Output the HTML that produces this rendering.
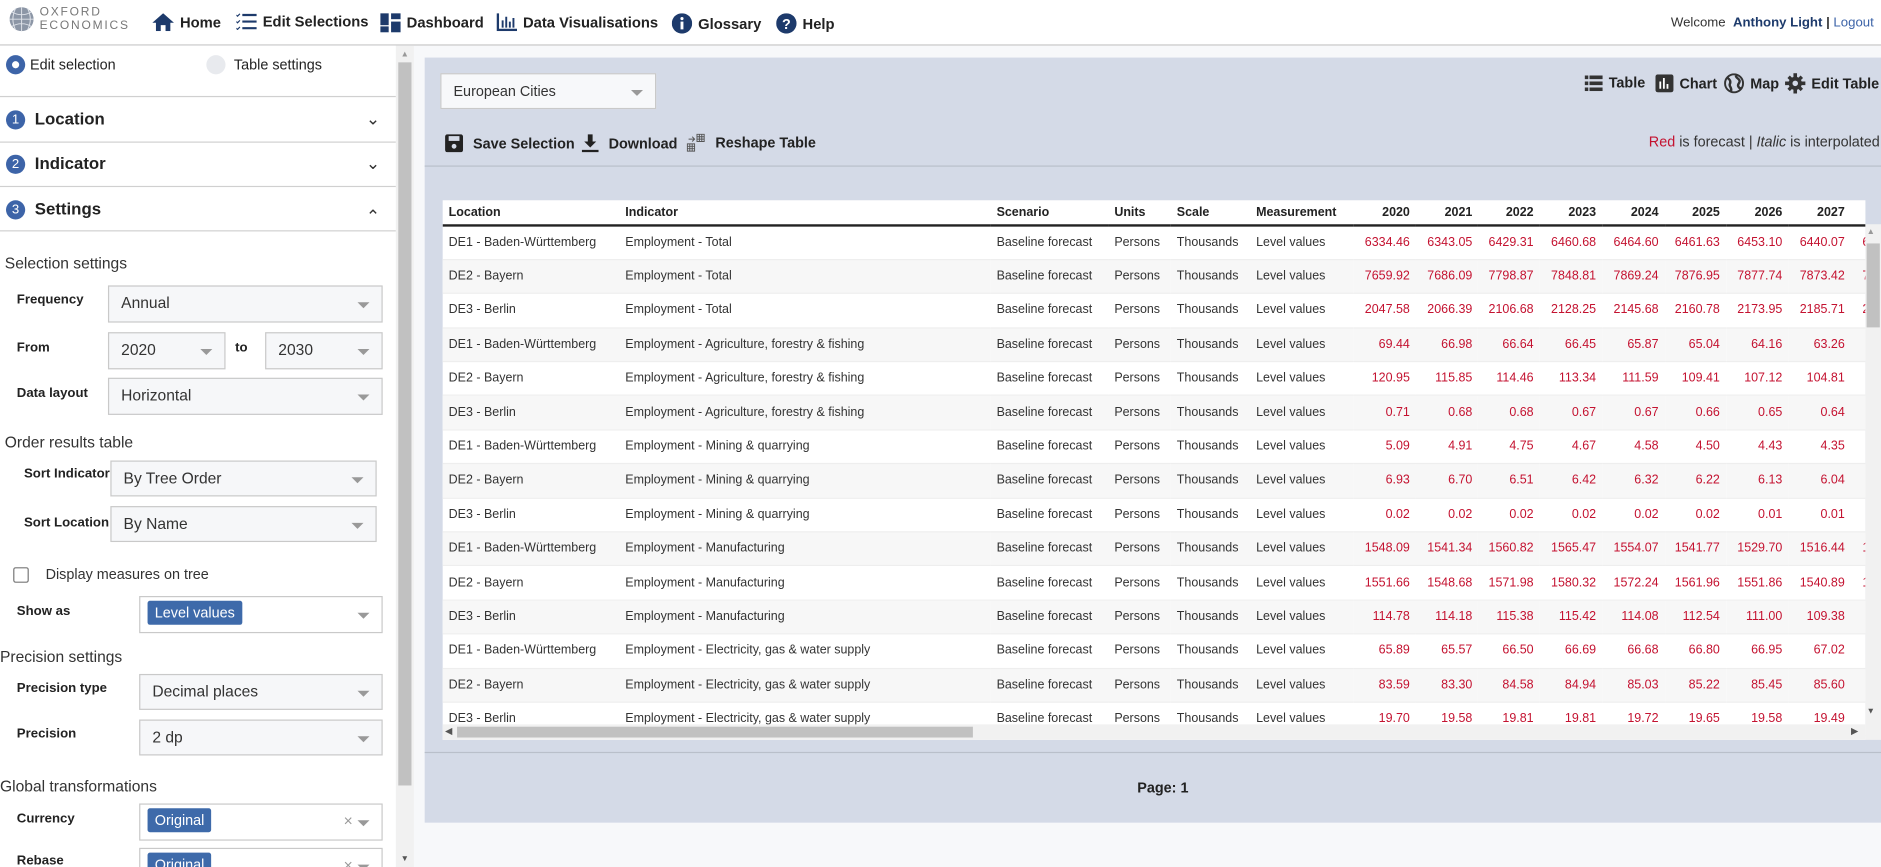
<!DOCTYPE html>
<html><head><meta charset="utf-8"><style>
html,body{margin:0;padding:0;width:1881px;height:867px;overflow:hidden;background:#f7f8fa}
#w{position:absolute;left:0;top:0;width:1568px;height:723px;transform:scale(1.19962,1.1992);transform-origin:0 0;font-family:"Liberation Sans",Arial,sans-serif;color:#222;overflow:hidden;background:#f7f8fa}
.a{position:absolute}
.hdr{left:0;top:0;width:1568px;height:37px;background:#fff;border-bottom:1px solid #c8c8c8}
.nav{top:11px;font-size:12.3px;font-weight:bold;color:#222;display:flex;align-items:center;gap:5px}
.left{left:0;top:38px;width:330px;height:685px;background:#fff}
.sb{left:330px;top:38px;width:15px;height:685px;background:#f1f1f1}
.ln{height:1px;background:#d0d0d0}
.sec{font-size:14px;font-weight:bold;color:#222}
.num{display:inline-block;width:16px;height:16px;border-radius:50%;background:#3d64a8;color:#fff;font-size:11px;text-align:center;line-height:16px;font-weight:normal;margin-right:8px;vertical-align:1px}
.h{font-size:13px;color:#333}
.lab{font-size:11px;font-weight:bold;color:#222}
.sel{background:#f6f7f9;border:1px solid #c9c9c9;box-sizing:border-box;font-size:13px;color:#333;padding-left:10px;line-height:28px}
.sel:after{content:"";position:absolute;right:10px;top:13px;border:5px solid transparent;border-top:5px solid #999;border-bottom:0}
.wsel{background:#fff}
.tag{display:inline-block;background:#3e6aaa;color:#fff;font-size:12px;line-height:20px;padding:0 6px;border-radius:2px;margin-top:3px;vertical-align:top}
.x{position:absolute;right:24px;top:0;color:#999;font-size:13px}
.panel{left:354px;top:48px;width:1214px;height:638px;background:#d4dae7}
.tb{left:369px;top:167px;width:1186px;height:450px;background:#fff;overflow:hidden}
table{border-collapse:collapse;table-layout:fixed;font-size:10.4px;color:#333;position:absolute;left:0;top:0;width:1226px}
th,td{box-sizing:border-box;overflow:hidden}
th{font-weight:bold;text-align:left;height:21px;border-bottom:2px solid #222;padding:0 5px;white-space:nowrap;color:#222}
td{height:28.4px;border-bottom:1px solid #eee;padding:0 5px;white-space:nowrap}
tr:nth-child(odd) td{background:#f7f7f7}
td.n{color:#c41230;text-align:right}
th.n{text-align:right}
.tool{font-size:12px;font-weight:bold;color:#222;display:flex;align-items:center;gap:5px}
</style></head><body><div id="w">
<div class="a hdr"></div>
<div class="a" style="left:7px;top:5px;display:flex;align-items:center;gap:4px">
<svg width="22" height="22" viewBox="0 0 22 22"><circle cx="11" cy="11" r="10" fill="#8c96a6"/><path d="M1 11h20M11 1v20M3 5c5 3 11 3 16 0M3 17c5-3 11-3 16 0M6 2c-3 6-3 12 0 18M16 2c3 6 3 12 0 18" stroke="#dfe3ea" stroke-width="0.8" fill="none"/></svg>
<div style="font-size:10px;letter-spacing:1.5px;color:#777;line-height:11px">OXFORD<br>ECONOMICS</div></div>
<div class="a nav" style="left:127px"><svg width="18" height="15" viewBox="0 0 18 15"><path d="M9 0L0 8h3v7h4v-5h4v5h4V8h3z" fill="#1d3a6b"/></svg>Home</div>
<div class="a nav" style="left:197px"><svg width="17" height="14" viewBox="0 0 17 14"><path d="M5 1.5h12M5 7h12M5 12.5h12" stroke="#1d3a6b" stroke-width="1.8"/><path d="M0 1.5l1 1 2-2M0 7l1 1 2-2M0 12.5l1 1 2-2" stroke="#1d3a6b" stroke-width="1" fill="none"/></svg>Edit Selections</div>
<div class="a nav" style="left:317px"><svg width="17" height="16" viewBox="0 0 17 16"><rect x="0" y="0" width="7" height="10" fill="#1d3a6b"/><rect x="9" y="0" width="8" height="5" fill="#1d3a6b"/><rect x="0" y="11" width="7" height="5" fill="#1d3a6b"/><rect x="9" y="7" width="8" height="9" fill="#1d3a6b"/></svg>Dashboard</div>
<div class="a nav" style="left:414px"><svg width="17" height="15" viewBox="0 0 17 15"><path d="M1 0v14h16" stroke="#1d3a6b" stroke-width="2" fill="none"/><path d="M5 12V6M8 12V3M11 12V7M14 12V4" stroke="#1d3a6b" stroke-width="1.6"/></svg>Data Visualisations</div>
<div class="a nav" style="left:560px"><svg width="17" height="17" viewBox="0 0 17 17"><circle cx="8.5" cy="8.5" r="8.5" fill="#1d3a6b"/><circle cx="8.5" cy="4.5" r="1.3" fill="#fff"/><rect x="7.3" y="7" width="2.4" height="6.5" fill="#fff"/></svg>Glossary</div>
<div class="a nav" style="left:647px"><svg width="17" height="17" viewBox="0 0 17 17"><circle cx="8.5" cy="8.5" r="8.5" fill="#1d3a6b"/><text x="8.5" y="13" font-size="12" font-weight="bold" fill="#fff" text-anchor="middle" font-family="Liberation Sans">?</text></svg>Help</div>
<div class="a" style="right:6px;top:13px;font-size:11px;color:#333">Welcome &nbsp;<b style="color:#1d3a6b">Anthony Light</b> <b>|</b> <span style="color:#3d64a8">Logout</span></div>

<div class="a left"></div>
<div class="a" style="left:5px;top:46px;width:16px;height:16px;border-radius:50%;background:#3d64a8"></div>
<div class="a" style="left:10px;top:51px;width:6px;height:6px;border-radius:50%;background:#fff"></div>
<div class="a" style="left:25px;top:47px;font-size:12px">Edit selection</div>
<div class="a" style="left:172px;top:46px;width:16px;height:16px;border-radius:50%;background:#e8eaee"></div>
<div class="a" style="left:195px;top:47px;font-size:12px">Table settings</div>
<div class="a ln" style="left:0;top:80px;width:330px"></div>
<div class="a sec" style="left:5px;top:91px"><span class="num">1</span>Location</div>
<div class="a" style="left:305px;top:91px;font-size:14px;color:#333">&#8964;</div>
<div class="a ln" style="left:0;top:118px;width:330px"></div>
<div class="a sec" style="left:5px;top:128px"><span class="num">2</span>Indicator</div>
<div class="a" style="left:305px;top:128px;font-size:14px;color:#333">&#8964;</div>
<div class="a ln" style="left:0;top:155px;width:330px"></div>
<div class="a sec" style="left:5px;top:166px"><span class="num">3</span>Settings</div>
<div class="a" style="left:305px;top:172px;font-size:14px;color:#333">&#8963;</div>
<div class="a ln" style="left:0;top:192px;width:330px"></div>

<div class="a h" style="left:4px;top:212px">Selection settings</div>
<div class="a lab" style="left:14px;top:244px">Frequency</div>
<div class="a sel" style="left:90px;top:238px;width:229px;height:31px">Annual</div>
<div class="a lab" style="left:14px;top:284px">From</div>
<div class="a sel" style="left:90px;top:277px;width:98px;height:31px">2020</div>
<div class="a lab" style="left:196px;top:284px">to</div>
<div class="a sel" style="left:221px;top:277px;width:98px;height:31px">2030</div>
<div class="a lab" style="left:14px;top:322px">Data layout</div>
<div class="a sel" style="left:90px;top:315px;width:229px;height:31px">Horizontal</div>
<div class="a h" style="left:4px;top:361px">Order results table</div>
<div class="a lab" style="left:20px;top:389px">Sort Indicator</div>
<div class="a sel" style="left:92px;top:384px;width:222px;height:30px">By Tree Order</div>
<div class="a lab" style="left:20px;top:430px">Sort Location</div>
<div class="a sel" style="left:92px;top:422px;width:222px;height:30px">By Name</div>
<div class="a" style="left:11px;top:473px;width:11px;height:11px;border:1px solid #777;border-radius:2px"></div>
<div class="a" style="left:38px;top:472px;font-size:12px;color:#333">Display measures on tree</div>
<div class="a lab" style="left:14px;top:504px">Show as</div>
<div class="a sel wsel" style="left:116px;top:497px;width:203px;height:31px;padding-left:6px"><span class="tag">Level values</span></div>
<div class="a h" style="left:0;top:540px">Precision settings</div>
<div class="a lab" style="left:14px;top:568px">Precision type</div>
<div class="a sel" style="left:116px;top:562px;width:203px;height:30px">Decimal places</div>
<div class="a lab" style="left:14px;top:606px">Precision</div>
<div class="a sel" style="left:116px;top:600px;width:203px;height:30px">2 dp</div>
<div class="a h" style="left:0;top:648px">Global transformations</div>
<div class="a lab" style="left:14px;top:677px">Currency</div>
<div class="a sel wsel" style="left:116px;top:670px;width:203px;height:31px;padding-left:6px"><span class="tag">Original</span><span class="x">×</span></div>
<div class="a lab" style="left:14px;top:712px">Rebase</div>
<div class="a sel wsel" style="left:116px;top:707px;width:203px;height:31px;padding-left:6px"><span class="tag">Original</span><span class="x">×</span></div>
<div class="a sb"></div>
<div class="a" style="left:332px;top:52px;width:11px;height:603px;background:#c1c1c1"></div>
<div class="a" style="left:334px;top:42px;font-size:7px;color:#999">▲</div>
<div class="a" style="left:334px;top:713px;font-size:7px;color:#555">▼</div>

<div class="a panel"></div>
<div class="a sel" style="left:367px;top:61px;width:180px;height:30px;font-size:12px;background:#f7f8fa">European Cities</div>
<div class="a tool" style="left:1321px;top:62px"><svg width="15" height="13" viewBox="0 0 15 13"><path d="M0 0h3v3H0zM4 0h11v3H4zM0 5h3v3H0zM4 5h11v3H4zM0 10h3v3H0zM4 10h11v3H4z" fill="#333"/></svg> Table</div>
<div class="a tool" style="left:1380px;top:62px"><svg width="15" height="15" viewBox="0 0 15 15"><rect width="15" height="15" rx="2" fill="#333"/><path d="M4 12V6M7 12V3M10 12V8" stroke="#fff" stroke-width="1.5"/></svg> Chart</div>
<div class="a tool" style="left:1437px;top:61px"><svg width="17" height="17" viewBox="0 0 17 17"><circle cx="8.5" cy="8.5" r="7.5" stroke="#333" stroke-width="1.6" fill="none"/><path d="M3 4c2 1 3 3 2 5s2 3 1 6M10 2c0 2 2 2 3 4s-2 3-1 5 2 2 3 1" stroke="#333" stroke-width="2" fill="none"/></svg> Map</div>
<div class="a tool" style="left:1488px;top:61px"><svg width="17" height="17" viewBox="0 0 17 17"><g fill="#333"><circle cx="8.5" cy="8.5" r="5.5"/><path d="M7 0h3v4H7zM7 13h3v4H7zM0 7h4v3H0zM13 7h4v3h-4z"/><path d="M2 4l2-2 3 3-2 2zM13 15l2-2-3-3-2 2zM2 13l2 2 3-3-2-2zM15 4l-2-2-3 3 2 2z"/></g><circle cx="8.5" cy="8.5" r="2.3" fill="#d4dae7"/></svg> Edit Table</div>
<div class="a tool" style="left:371px;top:112px"><svg width="15" height="15" viewBox="0 0 15 15"><rect width="15" height="15" rx="2" fill="#222"/><rect x="3" y="1.5" width="9" height="4" fill="#d4dae7"/><circle cx="7.5" cy="10" r="2" fill="#d4dae7"/></svg> &nbsp;Save Selection</div>
<div class="a tool" style="left:485px;top:112px"><svg width="14" height="15" viewBox="0 0 14 15"><path d="M5 0h4v6h3l-5 5-5-5h3z M0 13h14v2H0z" fill="#222"/></svg> &nbsp;Download</div>
<div class="a tool" style="left:572px;top:111px"><svg width="16" height="16" viewBox="0 0 16 16" stroke="#555" stroke-width="0.8" fill="none"><path d="M9 1h6v6H9zM9 3h6M9 5h6M11 1v6M13 1v6M1 9h6v6H1zM1 11h6M1 13h6M3 9v6M5 9v6M2 5h5M5 3l2 2-2 2"/></svg> &nbsp;Reshape Table</div>
<div class="a" style="right:1px;top:111px;font-size:12px;color:#333"><span style="color:#c41230">Red</span> is forecast | <i>Italic</i> is interpolated</div>
<div class="a" style="left:354px;top:138px;width:1214px;height:1px;background:#b9bfca"></div>

<div class="a tb"><table>
<colgroup><col style="width:147px"><col style="width:309px"><col style="width:98px"><col style="width:52px"><col style="width:66px"><col style="width:86px"><col style="width:52px"><col style="width:52px"><col style="width:51px"><col style="width:52px"><col style="width:52px"><col style="width:51px"><col style="width:52px"><col style="width:52px"><col style="width:52px"></colgroup>
<tr><th>Location</th><th>Indicator</th><th>Scenario</th><th>Units</th><th>Scale</th><th>Measurement</th><th class="n">2020</th><th class="n">2021</th><th class="n">2022</th><th class="n">2023</th><th class="n">2024</th><th class="n">2025</th><th class="n">2026</th><th class="n">2027</th><th class="n">2028</th></tr>
<tr><td>DE1 - Baden-Württemberg</td><td>Employment - Total</td><td>Baseline forecast</td><td>Persons</td><td>Thousands</td><td>Level values</td><td class="n">6334.46</td><td class="n">6343.05</td><td class="n">6429.31</td><td class="n">6460.68</td><td class="n">6464.60</td><td class="n">6461.63</td><td class="n">6453.10</td><td class="n">6440.07</td><td class="n">6425.00</td></tr>
<tr><td>DE2 - Bayern</td><td>Employment - Total</td><td>Baseline forecast</td><td>Persons</td><td>Thousands</td><td>Level values</td><td class="n">7659.92</td><td class="n">7686.09</td><td class="n">7798.87</td><td class="n">7848.81</td><td class="n">7869.24</td><td class="n">7876.95</td><td class="n">7877.74</td><td class="n">7873.42</td><td class="n">7866.00</td></tr>
<tr><td>DE3 - Berlin</td><td>Employment - Total</td><td>Baseline forecast</td><td>Persons</td><td>Thousands</td><td>Level values</td><td class="n">2047.58</td><td class="n">2066.39</td><td class="n">2106.68</td><td class="n">2128.25</td><td class="n">2145.68</td><td class="n">2160.78</td><td class="n">2173.95</td><td class="n">2185.71</td><td class="n">2196.00</td></tr>
<tr><td>DE1 - Baden-Württemberg</td><td>Employment - Agriculture, forestry &amp; fishing</td><td>Baseline forecast</td><td>Persons</td><td>Thousands</td><td>Level values</td><td class="n">69.44</td><td class="n">66.98</td><td class="n">66.64</td><td class="n">66.45</td><td class="n">65.87</td><td class="n">65.04</td><td class="n">64.16</td><td class="n">63.26</td><td class="n">62.40</td></tr>
<tr><td>DE2 - Bayern</td><td>Employment - Agriculture, forestry &amp; fishing</td><td>Baseline forecast</td><td>Persons</td><td>Thousands</td><td>Level values</td><td class="n">120.95</td><td class="n">115.85</td><td class="n">114.46</td><td class="n">113.34</td><td class="n">111.59</td><td class="n">109.41</td><td class="n">107.12</td><td class="n">104.81</td><td class="n">102.50</td></tr>
<tr><td>DE3 - Berlin</td><td>Employment - Agriculture, forestry &amp; fishing</td><td>Baseline forecast</td><td>Persons</td><td>Thousands</td><td>Level values</td><td class="n">0.71</td><td class="n">0.68</td><td class="n">0.68</td><td class="n">0.67</td><td class="n">0.67</td><td class="n">0.66</td><td class="n">0.65</td><td class="n">0.64</td><td class="n">0.63</td></tr>
<tr><td>DE1 - Baden-Württemberg</td><td>Employment - Mining &amp; quarrying</td><td>Baseline forecast</td><td>Persons</td><td>Thousands</td><td>Level values</td><td class="n">5.09</td><td class="n">4.91</td><td class="n">4.75</td><td class="n">4.67</td><td class="n">4.58</td><td class="n">4.50</td><td class="n">4.43</td><td class="n">4.35</td><td class="n">4.28</td></tr>
<tr><td>DE2 - Bayern</td><td>Employment - Mining &amp; quarrying</td><td>Baseline forecast</td><td>Persons</td><td>Thousands</td><td>Level values</td><td class="n">6.93</td><td class="n">6.70</td><td class="n">6.51</td><td class="n">6.42</td><td class="n">6.32</td><td class="n">6.22</td><td class="n">6.13</td><td class="n">6.04</td><td class="n">5.95</td></tr>
<tr><td>DE3 - Berlin</td><td>Employment - Mining &amp; quarrying</td><td>Baseline forecast</td><td>Persons</td><td>Thousands</td><td>Level values</td><td class="n">0.02</td><td class="n">0.02</td><td class="n">0.02</td><td class="n">0.02</td><td class="n">0.02</td><td class="n">0.02</td><td class="n">0.01</td><td class="n">0.01</td><td class="n">0.01</td></tr>
<tr><td>DE1 - Baden-Württemberg</td><td>Employment - Manufacturing</td><td>Baseline forecast</td><td>Persons</td><td>Thousands</td><td>Level values</td><td class="n">1548.09</td><td class="n">1541.34</td><td class="n">1560.82</td><td class="n">1565.47</td><td class="n">1554.07</td><td class="n">1541.77</td><td class="n">1529.70</td><td class="n">1516.44</td><td class="n">1503.00</td></tr>
<tr><td>DE2 - Bayern</td><td>Employment - Manufacturing</td><td>Baseline forecast</td><td>Persons</td><td>Thousands</td><td>Level values</td><td class="n">1551.66</td><td class="n">1548.68</td><td class="n">1571.98</td><td class="n">1580.32</td><td class="n">1572.24</td><td class="n">1561.96</td><td class="n">1551.86</td><td class="n">1540.89</td><td class="n">1530.00</td></tr>
<tr><td>DE3 - Berlin</td><td>Employment - Manufacturing</td><td>Baseline forecast</td><td>Persons</td><td>Thousands</td><td>Level values</td><td class="n">114.78</td><td class="n">114.18</td><td class="n">115.38</td><td class="n">115.42</td><td class="n">114.08</td><td class="n">112.54</td><td class="n">111.00</td><td class="n">109.38</td><td class="n">107.80</td></tr>
<tr><td>DE1 - Baden-Württemberg</td><td>Employment - Electricity, gas &amp; water supply</td><td>Baseline forecast</td><td>Persons</td><td>Thousands</td><td>Level values</td><td class="n">65.89</td><td class="n">65.57</td><td class="n">66.50</td><td class="n">66.69</td><td class="n">66.68</td><td class="n">66.80</td><td class="n">66.95</td><td class="n">67.02</td><td class="n">67.10</td></tr>
<tr><td>DE2 - Bayern</td><td>Employment - Electricity, gas &amp; water supply</td><td>Baseline forecast</td><td>Persons</td><td>Thousands</td><td>Level values</td><td class="n">83.59</td><td class="n">83.30</td><td class="n">84.58</td><td class="n">84.94</td><td class="n">85.03</td><td class="n">85.22</td><td class="n">85.45</td><td class="n">85.60</td><td class="n">85.70</td></tr>
<tr><td>DE3 - Berlin</td><td>Employment - Electricity, gas &amp; water supply</td><td>Baseline forecast</td><td>Persons</td><td>Thousands</td><td>Level values</td><td class="n">19.70</td><td class="n">19.58</td><td class="n">19.81</td><td class="n">19.81</td><td class="n">19.72</td><td class="n">19.65</td><td class="n">19.58</td><td class="n">19.49</td><td class="n">19.40</td></tr>
</table>
<div class="a" style="left:0;top:437px;width:1186px;height:13px;background:#f1f1f1"></div>
<div class="a" style="left:12px;top:439px;width:430px;height:9px;background:#c1c1c1"></div>
<div class="a" style="left:2px;top:438px;font-size:8px;color:#555">◀</div>
<div class="a" style="left:1174px;top:438px;font-size:8px;color:#555">▶</div>
</div>
<div class="a" style="left:1555px;top:187px;width:13px;height:430px;background:#f1f1f1"></div>
<div class="a" style="left:1556px;top:203px;width:11px;height:70px;background:#c1c1c1"></div>
<div class="a" style="left:1556px;top:190px;font-size:7px;color:#999">▲</div>
<div class="a" style="left:1556px;top:590px;font-size:7px;color:#555">▼</div>
<div class="a" style="left:354px;top:627px;width:1214px;height:1px;background:#b9bfca"></div>
<div class="a" style="left:948px;top:650px;font-size:12px;font-weight:bold;color:#222">Page: 1</div>
</div></body></html>
